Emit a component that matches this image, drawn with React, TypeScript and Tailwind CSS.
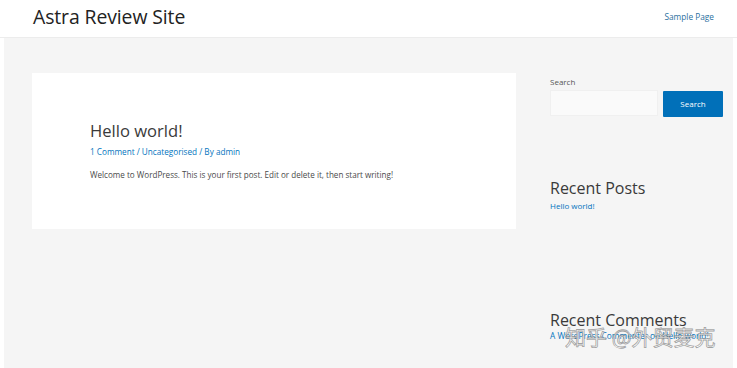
import React from 'react';

const font = { fontFamily: '"Open Sans", "Noto Sans", Arial, sans-serif' };

export default function App() {
  return (
    <div className="w-[737px] h-[368px] bg-white overflow-hidden relative" style={font}>
      {/* Header */}
      <header className="h-[38px] flex items-center justify-between pl-[33px] pr-[23px] border-b border-[#ececec]">
        <h1 className="text-[19.4px] leading-none text-[#222] tracking-[-0.1px] -mt-[3px]">Astra Review Site</h1>
        <a className="text-[8.3px] text-[#2a6fa0] mt-[-2px]">Sample Page</a>
      </header>

      {/* Body */}
      <div className="mx-[4px] h-[330px] bg-[#f5f5f5] flex pt-[35px] pl-[28px]">
        <main className="w-[484px] shrink-0">
          <article className="h-[156px] bg-white pl-[58px] pt-[48px]">
            <h2 className="text-[16.6px] leading-[20px] text-[#3a3a3a]">Hello world!</h2>
            <div className="text-[8.2px] leading-[12px] mt-[5px] text-[#0274be]">
              1 Comment / Uncategorised / By admin
            </div>
            <p className="text-[8.1px] leading-[12px] mt-[11px] text-[#4a4a4a]">
              Welcome to WordPress. This is your first post. Edit or delete it, then start writing!
            </p>
          </article>
        </main>

        <aside className="ml-[34px] w-[173px] shrink-0">
          <label className="block text-[8px] leading-[10px] text-[#555] mt-[4px]">Search</label>
          <div className="flex gap-[5px] mt-[3px]">
            <div className="w-[108px] h-[26px] bg-[#fafafa] border border-[#f0f0f0]" />
            <button className="w-[60px] h-[26px] mt-[1px] bg-[#0170b9] text-white text-[8px] rounded-[1px]">
              Search
            </button>
          </div>

          <h3 className="text-[16px] leading-[20px] text-[#3a3a3a] mt-[61px]">Recent Posts</h3>
          <a className="block text-[8px] leading-[12px] text-[#0274be] mt-[2px]">Hello world!</a>

          <h3 className="text-[16px] leading-[20px] text-[#3a3a3a] mt-[98px]">Recent Comments</h3>
          <a className="block text-[8.3px] leading-[10px] text-[#0274be] mt-[1px] whitespace-nowrap">
            A WordPress Commenter on Hello world!
          </a>
        </aside>
      </div>

      {/* Watermark */}
      <div
        className="absolute left-[565px] top-[326px] text-[21px] leading-none text-white/85 whitespace-nowrap"
        style={{
          fontFamily: '"Noto Sans CJK SC", sans-serif',
          WebkitTextStroke: '0.8px rgba(110,110,110,0.65)',
        }}
      >
        知乎 @外贸麦克
      </div>
    </div>
  );
}
